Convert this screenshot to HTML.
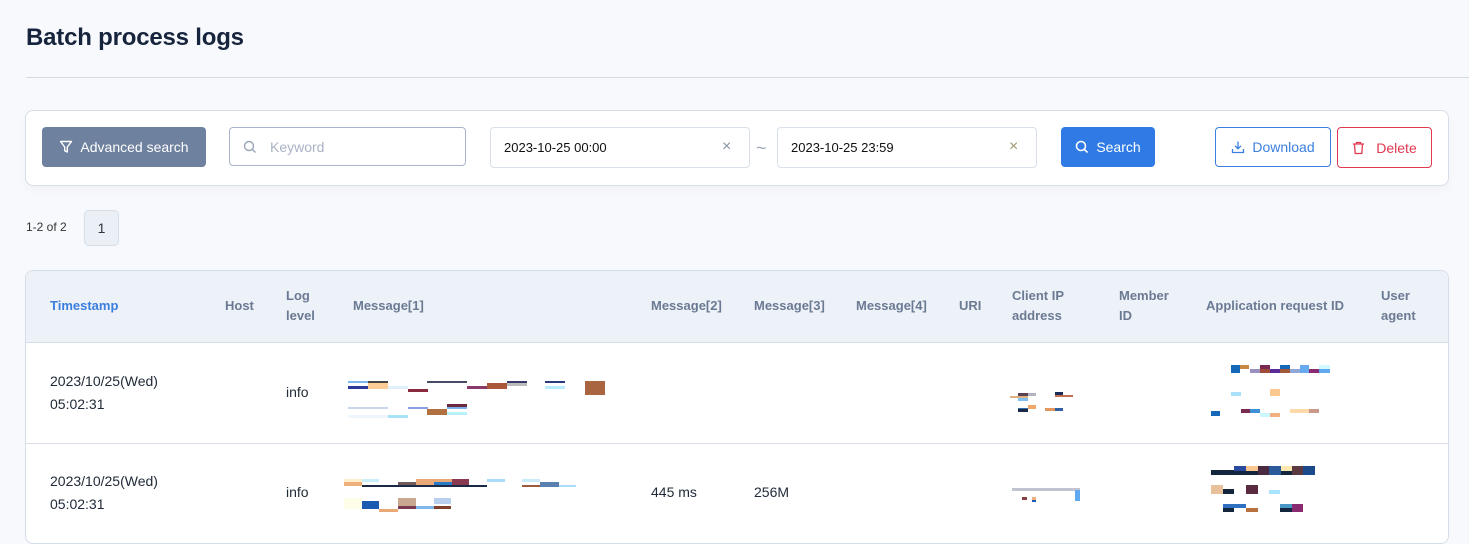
<!DOCTYPE html>
<html><head><meta charset="utf-8"><style>
*{box-sizing:border-box;margin:0;padding:0}
html,body{width:1469px;height:544px;overflow:hidden}
body{background:#f8f9fc;font-family:"Liberation Sans",sans-serif;position:relative;color:#1f2937}
.a{position:absolute}
.b{position:absolute}
.h{position:absolute;font-size:13px;color:#6b7a93;font-weight:bold;line-height:20px}
.t{position:absolute;font-size:14px;color:#1f2937;line-height:23px}
.btn{position:absolute;border-radius:4px;font-size:14px;display:flex;align-items:center;justify-content:center;gap:7px}
.inp{position:absolute;background:#fff;border:1px solid #d9e0ea;border-radius:4px;font-size:13px;display:flex;align-items:center;padding-left:13px}
</style></head><body>
<div class="a" style="left:26px;top:24px;font-size:24px;font-weight:bold;color:#16243d;letter-spacing:-0.2px">Batch process logs</div>
<div class="a" style="left:26px;top:77px;width:1443px;height:1px;background:#d3dbe5"></div>

<div class="a" style="left:25px;top:110px;width:1424px;height:76px;background:#fff;border:1px solid #d6deea;border-radius:8px;box-shadow:0 4px 10px rgba(0,0,0,0.03)"></div>
<div class="btn" style="left:42px;top:127px;width:164px;height:40px;background:#6e819e;color:#fff">
<svg width="14" height="14" viewBox="0 0 14 14"><path d="M1.5 1.5h11L8.3 7v5l-2.6-1.3V7z" fill="none" stroke="#fff" stroke-width="1.4" stroke-linejoin="round"/></svg>Advanced search</div>
<div class="inp" style="left:229px;top:127px;width:237px;height:39px;border-color:#a9b4cc;color:#aab3c5;font-size:14px">
<svg width="14" height="14" viewBox="0 0 14 14" style="margin-right:13px"><circle cx="6" cy="6" r="4.5" fill="none" stroke="#9aa5b8" stroke-width="1.4"/><path d="M9.5 9.5L12.5 12.5" stroke="#9aa5b8" stroke-width="1.4"/></svg>Keyword</div>
<div class="inp" style="left:490px;top:127px;width:260px;height:41px;color:#111">2023-10-25 00:00<span class="a" style="left:231px;top:10px;color:#8a94a6;font-size:16px">×</span></div>
<div class="a" style="left:756px;top:138px;color:#a0a8b8;font-size:18px">~</div>
<div class="inp" style="left:777px;top:127px;width:260px;height:41px;color:#111">2023-10-25 23:59<span class="a" style="left:231px;top:10px;color:#a09a70;font-size:16px">×</span></div>
<div class="btn" style="left:1061px;top:127px;width:94px;height:40px;background:#2f7ae5;color:#fff">
<svg width="14" height="14" viewBox="0 0 14 14"><circle cx="6" cy="6" r="4.5" fill="none" stroke="#fff" stroke-width="1.6"/><path d="M9.5 9.5L12.5 12.5" stroke="#fff" stroke-width="1.6"/></svg>Search</div>
<div class="btn" style="left:1215px;top:127px;width:116px;height:40px;border:1px solid #3a7fe0;color:#3a7fe0;background:#fff">
<svg width="14" height="14" viewBox="0 0 14 14"><path d="M7 1.5v7M4 5.8L7 8.8 10 5.8M1.5 9v3.5h11V9" fill="none" stroke="#3a7fe0" stroke-width="1.3"/></svg>Download</div>
<div class="btn" style="left:1337px;top:127px;width:95px;height:41px;border:1px solid #e0394f;color:#e0394f;background:#fff;gap:11px">
<svg width="13" height="14" viewBox="0 0 13 14"><path d="M1 3h11M4.5 3V1.5h4V3M2.5 3l.7 9.5h6.6l.7-9.5" fill="none" stroke="#e0394f" stroke-width="1.3"/></svg>Delete</div>

<div class="a" style="left:26px;top:220px;font-size:12px;color:#333">1-2 of 2</div>
<div class="a" style="left:84px;top:210px;width:35px;height:36px;background:#ebf0f7;border:1px solid #d5dde8;border-radius:5px;font-size:14px;color:#334;display:flex;align-items:center;justify-content:center">1</div>

<div class="a" style="left:25px;top:270px;width:1424px;height:274px;background:#fff;border:1px solid #d5dde8;border-radius:8px;overflow:hidden">
<div class="a" style="left:0;top:0;width:1424px;height:72px;background:#edf1f8;border-bottom:1px solid #d5dde8"></div>
<div class="a" style="left:0;top:172px;width:1424px;height:1px;background:#d9dfe7"></div>
</div>
<div class="h" style="left:50px;top:296px;color:#3a7fe0">Timestamp</div>
<div class="h" style="left:225px;top:296px">Host</div>
<div class="h" style="left:286px;top:286px">Log<br>level</div>
<div class="h" style="left:353px;top:296px">Message[1]</div>
<div class="h" style="left:651px;top:296px">Message[2]</div>
<div class="h" style="left:754px;top:296px">Message[3]</div>
<div class="h" style="left:856px;top:296px">Message[4]</div>
<div class="h" style="left:959px;top:296px">URI</div>
<div class="h" style="left:1012px;top:286px">Client IP<br>address</div>
<div class="h" style="left:1119px;top:286px">Member<br>ID</div>
<div class="h" style="left:1206px;top:296px">Application request ID</div>
<div class="h" style="left:1381px;top:286px">User<br>agent</div>

<div class="t" style="left:50px;top:370px">2023/10/25(Wed)<br>05:02:31</div>
<div class="t" style="left:286px;top:381px">info</div>
<div class="t" style="left:50px;top:470px">2023/10/25(Wed)<br>05:02:31</div>
<div class="t" style="left:286px;top:481px">info</div>
<div class="t" style="left:651px;top:481px">445 ms</div>
<div class="t" style="left:754px;top:481px">256M</div>

<div class="b" style="left:348px;top:381px;width:20px;height:2px;background:#7ab8ee"></div>
<div class="b" style="left:348px;top:386px;width:20px;height:3px;background:#2b3a9a"></div>
<div class="b" style="left:368px;top:381px;width:20px;height:8px;background:#fdcd95"></div>
<div class="b" style="left:368px;top:381px;width:20px;height:2px;background:#444"></div>
<div class="b" style="left:388px;top:386px;width:20px;height:3px;background:#dff0fb"></div>
<div class="b" style="left:408px;top:389px;width:20px;height:3px;background:#8a2a40"></div>
<div class="b" style="left:427px;top:381px;width:40px;height:2px;background:#444c66"></div>
<div class="b" style="left:467px;top:386px;width:20px;height:3px;background:#8a3a6a"></div>
<div class="b" style="left:487px;top:383px;width:20px;height:6px;background:#a9583a"></div>
<div class="b" style="left:507px;top:381px;width:20px;height:2px;background:#373a6a"></div>
<div class="b" style="left:507px;top:383px;width:20px;height:3px;background:#bbb"></div>
<div class="b" style="left:545px;top:381px;width:20px;height:2px;background:#2b3a7a"></div>
<div class="b" style="left:545px;top:386px;width:20px;height:3px;background:#b9ecfc"></div>
<div class="b" style="left:585px;top:381px;width:20px;height:14px;background:#a96540"></div>
<div class="b" style="left:348px;top:407px;width:40px;height:2px;background:#c8d8ea"></div>
<div class="b" style="left:348px;top:415px;width:40px;height:3px;background:#eef5fb"></div>
<div class="b" style="left:388px;top:415px;width:20px;height:3px;background:#a8e2f8"></div>
<div class="b" style="left:408px;top:407px;width:20px;height:2px;background:#8aa0e0"></div>
<div class="b" style="left:427px;top:409px;width:20px;height:6px;background:#b07040"></div>
<div class="b" style="left:447px;top:404px;width:20px;height:3px;background:#6a2a40"></div>
<div class="b" style="left:447px;top:407px;width:20px;height:2px;background:#7ab0ee"></div>
<div class="b" style="left:447px;top:412px;width:20px;height:3px;background:#b8f0fc"></div>
<div class="b" style="left:344px;top:479px;width:18px;height:3px;background:#fdf0c8"></div>
<div class="b" style="left:344px;top:482px;width:18px;height:4px;background:#edb07a"></div>
<div class="b" style="left:362px;top:479px;width:17px;height:3px;background:#c8f0fc"></div>
<div class="b" style="left:362px;top:485px;width:125px;height:2px;background:#1a2a44"></div>
<div class="b" style="left:398px;top:482px;width:18px;height:3px;background:#705a5a"></div>
<div class="b" style="left:416px;top:479px;width:36px;height:6px;background:#e8a878"></div>
<div class="b" style="left:434px;top:482px;width:18px;height:3px;background:#2a78c8"></div>
<div class="b" style="left:452px;top:479px;width:17px;height:6px;background:#8a3a50"></div>
<div class="b" style="left:487px;top:479px;width:18px;height:3px;background:#a8dcf8"></div>
<div class="b" style="left:522px;top:479px;width:18px;height:3px;background:#c8ecfa"></div>
<div class="b" style="left:522px;top:485px;width:18px;height:2px;background:#a05a40"></div>
<div class="b" style="left:540px;top:482px;width:19px;height:5px;background:#5a80b0"></div>
<div class="b" style="left:559px;top:485px;width:17px;height:2px;background:#a8dcf8"></div>
<div class="b" style="left:344px;top:498px;width:18px;height:11px;background:#fefee8"></div>
<div class="b" style="left:362px;top:501px;width:17px;height:8px;background:#1a5ab0"></div>
<div class="b" style="left:379px;top:509px;width:19px;height:3px;background:#e8a878"></div>
<div class="b" style="left:398px;top:498px;width:18px;height:11px;background:#c8a890"></div>
<div class="b" style="left:398px;top:506px;width:18px;height:3px;background:#7a3a50"></div>
<div class="b" style="left:416px;top:506px;width:18px;height:3px;background:#80b8ee"></div>
<div class="b" style="left:434px;top:498px;width:17px;height:6px;background:#b8cfee"></div>
<div class="b" style="left:434px;top:506px;width:17px;height:3px;background:#80402a"></div>
<div class="b" style="left:1010px;top:396px;width:18px;height:2px;background:#e0b080"></div>
<div class="b" style="left:1018px;top:393px;width:10px;height:3px;background:#5a4050"></div>
<div class="b" style="left:1028px;top:393px;width:8px;height:3px;background:#b0b4c0"></div>
<div class="b" style="left:1018px;top:398px;width:10px;height:3px;background:#80c0f0"></div>
<div class="b" style="left:1018px;top:408px;width:10px;height:4px;background:#3070b0"></div>
<div class="b" style="left:1018px;top:409px;width:10px;height:3px;background:#1a2a44"></div>
<div class="b" style="left:1028px;top:405px;width:8px;height:4px;background:#f0a868"></div>
<div class="b" style="left:1055px;top:395px;width:18px;height:2px;background:#c07050"></div>
<div class="b" style="left:1055px;top:392px;width:8px;height:3px;background:#1a2a5a"></div>
<div class="b" style="left:1045px;top:408px;width:18px;height:3px;background:#e09860"></div>
<div class="b" style="left:1055px;top:408px;width:8px;height:3px;background:#3060a0"></div>
<div class="b" style="left:1012px;top:488px;width:68px;height:3px;background:#c0c4d0"></div>
<div class="b" style="left:1075px;top:490px;width:5px;height:11px;background:#60a8f0"></div>
<div class="b" style="left:1022px;top:497px;width:5px;height:3px;background:#8a4040"></div>
<div class="b" style="left:1032px;top:497px;width:4px;height:3px;background:#f0b080"></div>
<div class="b" style="left:1032px;top:500px;width:4px;height:2px;background:#1a5ab0"></div>
<div class="b" style="left:1231px;top:365px;width:9px;height:8px;background:#1668b8"></div>
<div class="b" style="left:1240px;top:365px;width:9px;height:4px;background:#c88a40"></div>
<div class="b" style="left:1250px;top:369px;width:10px;height:4px;background:#9a90c0"></div>
<div class="b" style="left:1260px;top:365px;width:10px;height:8px;background:#a04a3a"></div>
<div class="b" style="left:1260px;top:365px;width:10px;height:4px;background:#7a2a50"></div>
<div class="b" style="left:1270px;top:369px;width:10px;height:4px;background:#5a2a9a"></div>
<div class="b" style="left:1280px;top:365px;width:10px;height:8px;background:#a05a3a"></div>
<div class="b" style="left:1280px;top:365px;width:10px;height:4px;background:#1668b8"></div>
<div class="b" style="left:1290px;top:369px;width:10px;height:4px;background:#90a8d8"></div>
<div class="b" style="left:1300px;top:365px;width:9px;height:8px;background:#68aaf0"></div>
<div class="b" style="left:1309px;top:369px;width:10px;height:4px;background:#8a2a70"></div>
<div class="b" style="left:1319px;top:365px;width:11px;height:8px;background:#60a8f0"></div>
<div class="b" style="left:1319px;top:365px;width:11px;height:4px;background:#d0faff"></div>
<div class="b" style="left:1231px;top:392px;width:10px;height:4px;background:#a8e0fc"></div>
<div class="b" style="left:1270px;top:389px;width:10px;height:7px;background:#fdc890"></div>
<div class="b" style="left:1211px;top:411px;width:9px;height:5px;background:#1668b8"></div>
<div class="b" style="left:1241px;top:409px;width:9px;height:4px;background:#7a2a50"></div>
<div class="b" style="left:1250px;top:409px;width:10px;height:4px;background:#4090d8"></div>
<div class="b" style="left:1260px;top:413px;width:20px;height:4px;background:#c8f8fc"></div>
<div class="b" style="left:1270px;top:413px;width:10px;height:4px;background:#f0b080"></div>
<div class="b" style="left:1290px;top:409px;width:20px;height:4px;background:#fdd8a8"></div>
<div class="b" style="left:1309px;top:409px;width:10px;height:4px;background:#c89888"></div>
<div class="b" style="left:1211px;top:470px;width:104px;height:5px;background:#14263e"></div>
<div class="b" style="left:1234px;top:466px;width:12px;height:5px;background:#2a4aa0"></div>
<div class="b" style="left:1246px;top:466px;width:12px;height:5px;background:#fdc890"></div>
<div class="b" style="left:1258px;top:466px;width:11px;height:9px;background:#4a2a40"></div>
<div class="b" style="left:1269px;top:466px;width:12px;height:9px;background:#2a5a9a"></div>
<div class="b" style="left:1281px;top:466px;width:11px;height:5px;background:#fde8b0"></div>
<div class="b" style="left:1292px;top:466px;width:11px;height:9px;background:#5a3a40"></div>
<div class="b" style="left:1303px;top:466px;width:12px;height:9px;background:#1a4a8a"></div>
<div class="b" style="left:1211px;top:485px;width:12px;height:9px;background:#e8c09a"></div>
<div class="b" style="left:1223px;top:489px;width:11px;height:5px;background:#14263e"></div>
<div class="b" style="left:1246px;top:485px;width:12px;height:9px;background:#5a2a40"></div>
<div class="b" style="left:1269px;top:490px;width:11px;height:4px;background:#a8e4fc"></div>
<div class="b" style="left:1223px;top:504px;width:23px;height:4px;background:#3070c0"></div>
<div class="b" style="left:1223px;top:508px;width:11px;height:4px;background:#14263e"></div>
<div class="b" style="left:1246px;top:508px;width:12px;height:4px;background:#b87040"></div>
<div class="b" style="left:1280px;top:504px;width:12px;height:8px;background:#14263e"></div>
<div class="b" style="left:1280px;top:504px;width:12px;height:4px;background:#4898c8"></div>
<div class="b" style="left:1292px;top:504px;width:11px;height:8px;background:#8a2a70"></div>
</body></html>
